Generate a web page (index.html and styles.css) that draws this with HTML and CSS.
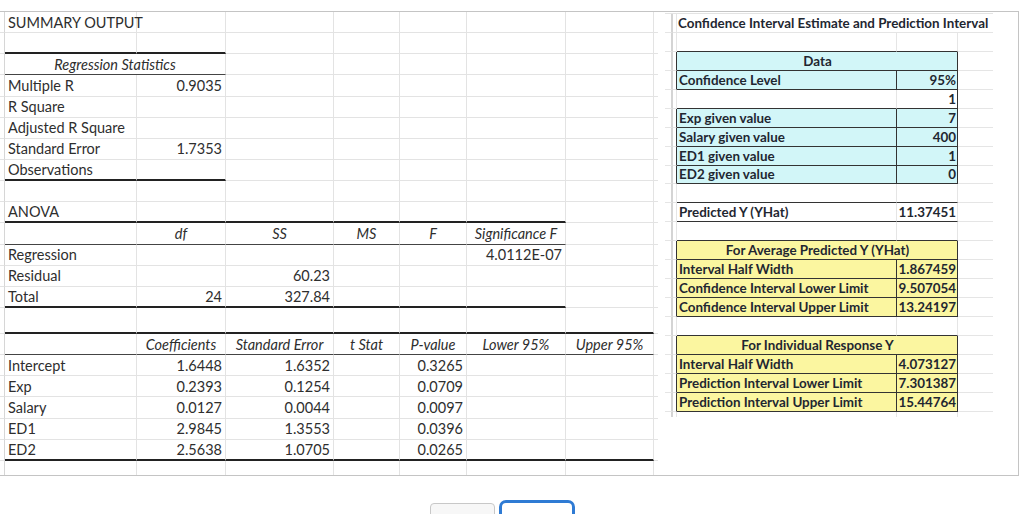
FILE: index.html
```html
<!DOCTYPE html>
<html lang="en">
<head>
<meta charset="utf-8">
<title>Regression Summary Output</title>
<link rel="stylesheet" href="styles.css">
</head>
<body>
<div class="frame">
  <div class="sheet">
    <div class="r"><span></span><span>SUMMARY OUTPUT</span><span></span><span></span><span></span><span></span><span></span><span></span><span></span></div>
    <div class="r"><span></span><span class="tk"></span><span class="tk"></span><span></span><span></span><span></span><span></span><span></span><span></span></div>
    <div class="r"><span></span><span class="h s2 tn">Regression Statistics</span><span></span><span></span><span></span><span></span><span></span><span></span></div>
    <div class="r"><span></span><span>Multiple R</span><span class="n">0.9035</span><span></span><span></span><span></span><span></span><span></span><span></span></div>
    <div class="r"><span></span><span>R Square</span><span></span><span></span><span></span><span></span><span></span><span></span><span></span></div>
    <div class="r"><span></span><span>Adjusted R Square</span><span></span><span></span><span></span><span></span><span></span><span></span><span></span></div>
    <div class="r"><span></span><span>Standard Error</span><span class="n">1.7353</span><span></span><span></span><span></span><span></span><span></span><span></span></div>
    <div class="r"><span></span><span class="tk">Observations</span><span class="tk"></span><span></span><span></span><span></span><span></span><span></span><span></span></div>
    <div class="r"><span></span><span></span><span></span><span></span><span></span><span></span><span></span><span></span><span></span></div>
    <div class="r"><span></span><span class="tk">ANOVA</span><span class="tk"></span><span class="tk"></span><span class="tk"></span><span class="tk"></span><span class="tk"></span><span></span><span></span></div>
    <div class="r"><span></span><span class="tn"></span><span class="h tn">df</span><span class="h tn">SS</span><span class="h tn">MS</span><span class="h tn">F</span><span class="h tn">Significance F</span><span></span><span></span></div>
    <div class="r"><span></span><span>Regression</span><span></span><span></span><span></span><span></span><span class="n">4.0112E-07</span><span></span><span></span></div>
    <div class="r"><span></span><span>Residual</span><span></span><span class="n">60.23</span><span></span><span></span><span></span><span></span><span></span></div>
    <div class="r"><span></span><span class="tk">Total</span><span class="tk n">24</span><span class="tk n">327.84</span><span class="tk"></span><span class="tk"></span><span class="tk"></span><span></span><span></span></div>
    <div class="r tall"><span></span><span class="tk"></span><span class="tk"></span><span class="tk"></span><span class="tk"></span><span class="tk"></span><span class="tk"></span><span class="tk"></span><span></span></div>
    <div class="r"><span></span><span class="tn"></span><span class="h tn">Coefficients</span><span class="h tn">Standard Error</span><span class="h tn">t Stat</span><span class="h tn">P-value</span><span class="h tn">Lower 95%</span><span class="h tn">Upper 95%</span><span></span></div>
    <div class="r"><span></span><span>Intercept</span><span class="n">1.6448</span><span class="n">1.6352</span><span></span><span class="n">0.3265</span><span></span><span></span><span></span></div>
    <div class="r"><span></span><span>Exp</span><span class="n">0.2393</span><span class="n">0.1254</span><span></span><span class="n">0.0709</span><span></span><span></span><span></span></div>
    <div class="r"><span></span><span>Salary</span><span class="n">0.0127</span><span class="n">0.0044</span><span></span><span class="n">0.0097</span><span></span><span></span><span></span></div>
    <div class="r"><span></span><span>ED1</span><span class="n">2.9845</span><span class="n">1.3553</span><span></span><span class="n">0.0396</span><span></span><span></span><span></span></div>
    <div class="r"><span></span><span class="tk">ED2</span><span class="tk n">2.5638</span><span class="tk n">1.0705</span><span class="tk"></span><span class="tk n">0.0265</span><span class="tk"></span><span class="tk"></span><span></span></div>
    <div class="r"><span></span><span></span><span></span><span></span><span></span><span></span><span></span><span></span><span></span></div>
  </div>

  <div class="ci">
    <div class="q"><span></span><span></span><span class="t s3">Confidence Interval Estimate and Prediction Interval</span></div>
    <div class="q"><span></span><span></span><span class="db"></span><span class="db"></span><span></span></div>
    <div class="q"><span></span><span class="dr"></span><span class="cy s2 ctr">Data</span><span></span></div>
    <div class="q"><span></span><span class="dr"></span><span class="cy">Confidence Level</span><span class="cy n">95%</span><span></span></div>
    <div class="q"><span></span><span></span><span class="db"></span><span class="db dr n">1</span><span></span></div>
    <div class="q"><span></span><span class="dr"></span><span class="cy">Exp given value</span><span class="cy n">7</span><span></span></div>
    <div class="q"><span></span><span class="dr"></span><span class="cy">Salary given value</span><span class="cy n">400</span><span></span></div>
    <div class="q"><span></span><span class="dr"></span><span class="cy">ED1 given value</span><span class="cy n">1</span><span></span></div>
    <div class="q"><span></span><span class="dr"></span><span class="cy">ED2 given value</span><span class="cy n">0</span><span></span></div>
    <div class="q"><span></span><span></span><span class="db"></span><span class="db"></span><span></span></div>
    <div class="q"><span></span><span></span><span class="db">Predicted Y (YHat)</span><span class="db n">11.37451</span><span></span></div>
    <div class="q"><span></span><span></span><span class="db"></span><span class="db"></span><span></span></div>
    <div class="q"><span></span><span class="dr"></span><span class="yl s2 ctr">For Average Predicted Y (YHat)</span><span></span></div>
    <div class="q"><span></span><span class="dr"></span><span class="yl">Interval Half Width</span><span class="yl n">1.867459</span><span></span></div>
    <div class="q"><span></span><span class="dr"></span><span class="yl">Confidence Interval Lower Limit</span><span class="yl n">9.507054</span><span></span></div>
    <div class="q"><span></span><span class="dr"></span><span class="yl">Confidence Interval Upper Limit</span><span class="yl n">13.24197</span><span></span></div>
    <div class="q"><span></span><span></span><span class="db"></span><span class="db"></span><span></span></div>
    <div class="q"><span></span><span class="dr"></span><span class="yl s2 ctr">For Individual Response Y</span><span></span></div>
    <div class="q"><span></span><span class="dr"></span><span class="yl">Interval Half Width</span><span class="yl n">4.073127</span><span></span></div>
    <div class="q"><span></span><span class="dr"></span><span class="yl">Prediction Interval Lower Limit</span><span class="yl n">7.301387</span><span></span></div>
    <div class="q"><span></span><span class="dr"></span><span class="yl">Prediction Interval Upper Limit</span><span class="yl n">15.44764</span><span></span></div>
    <div class="q"><span></span><span></span><span></span><span></span><span></span></div>
  </div>
</div>

<div class="actions">
  <button class="btn" type="button"></button>
  <button class="btn primary" type="button"></button>
</div>
</body>
</html>
```

FILE: styles.css
```css
html, body {
  margin: 0;
  padding: 0;
  height: 514px;
  overflow: hidden;
  background: #ffffff;
}

body {
  font-family: "Lato", "Liberation Sans", sans-serif;
  color: #2e2e2e;
}

.frame {
  margin-top: 11px;
  width: 1018px;
  height: 463px;
  border-top: 1px solid #c4c4c4;
  border-right: 1px solid #c4c4c4;
  border-bottom: 1px solid #c4c4c4;
  display: flex;
  align-items: flex-start;
  gap: 7px;
}

/* ---------- left regression sheet ---------- */
.sheet {
  width: 658px;
  height: 463px;
  overflow: hidden;
  flex: none;
  font-size: 14.5px;
}

.r {
  display: grid;
  grid-template-columns: 5px 132px 89px 108px 66px 67px 99px 88px 4px;
  height: 21.15px;
}

.r.tall {
  height: 26px;
}

.r > span {
  box-sizing: border-box;
  border-right: 1px solid #e3e3e3;
  border-bottom: 1px solid #e3e3e3;
  padding: 0 3px;
  display: flex;
  align-items: center;
  white-space: nowrap;
  min-width: 0;
}

.r > span:first-child {
  padding: 0;
  border-right-color: #d6d6d6;
}

.r > span:last-child {
  border-right: none;
  padding: 0;
}

.n {
  justify-content: flex-end;
}

.h {
  justify-content: center;
  font-style: italic;
}

.s2 {
  grid-column: span 2;
}

.s3 {
  grid-column: span 3;
}

.r > span.tk {
  border-bottom: 2px solid #222222;
}

.r > span.tn {
  border-bottom: 1px solid #444444;
}

/* ---------- right confidence interval sheet ---------- */
.ci {
  margin-top: 1px;
  width: 328px;
  height: 403px;
  overflow: hidden;
  flex: none;
  border-top: 1px solid #e3e3e3;
  font-size: 13.4px;
  font-weight: 700;
  color: #1f2731;
}

.q {
  display: grid;
  grid-template-columns: 8px 4px 220px 61px 35px;
  height: 18.95px;
}

.q > span {
  box-sizing: border-box;
  border-right: 1px solid #e5e5e5;
  border-bottom: 1px solid #e5e5e5;
  padding: 0 1px 0 2px;
  display: flex;
  align-items: center;
  white-space: nowrap;
  min-width: 0;
}

.q > span:first-child {
  padding: 0;
  border-right: 2px solid #d4d4d4;
}

.q > span:nth-child(2) {
  padding: 0;
}

.q > span:last-child {
  border-right: none;
}

.q > span.t {
  border-right: none;
  padding-left: 1px;
}

.q > span.db {
  border-bottom-color: #333333;
}

.q > span.dr {
  border-right-color: #333333;
}

.q > span.cy {
  background: #d2f6f8;
  border-right-color: #333333;
  border-bottom-color: #333333;
}

.q > span.yl {
  background: #fbf6a0;
  border-right-color: #333333;
  border-bottom-color: #333333;
}

.ctr {
  justify-content: center;
}

/* ---------- buttons ---------- */
.actions {
  display: flex;
  align-items: flex-start;
  gap: 4px;
  height: 38px;
  box-sizing: border-box;
  overflow: hidden;
  padding-left: 430px;
  padding-top: 24px;
}

.btn {
  flex: none;
  width: 65px;
  height: 40px;
  margin-top: 3px;
  border: 1px solid #c8c8c8;
  border-radius: 4px;
  background: #f7f7f7;
  padding: 0;
}

.btn.primary {
  width: 76px;
  height: 44px;
  margin-top: 0;
  border: 3px solid #2f7bd4;
  border-radius: 7px;
  background: #ffffff;
}
```
